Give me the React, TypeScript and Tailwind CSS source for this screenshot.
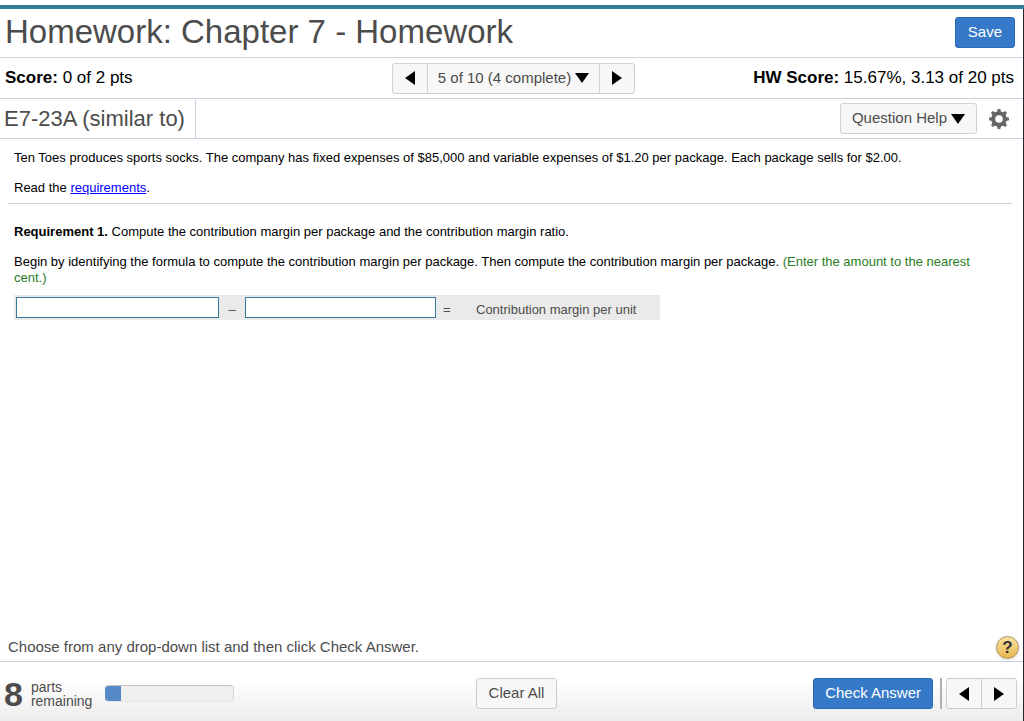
import { useState } from 'react';
import { clsx } from 'clsx';

const TOTAL_PARTS = 9;

interface ArrowProps {
  direction: 'left' | 'right' | 'down';
}

const arrowPoints = {
  left: '10,0 10,14 0,7',
  right: '0,0 0,14 10,7',
  down: '0,0 14,0 7,10',
};

const Arrow = ({ direction }: ArrowProps) => {
  const isDown = direction === 'down';
  return (
    <svg
      width={isDown ? 14 : 10}
      height={isDown ? 10 : 14}
      viewBox={isDown ? '0 0 14 10' : '0 0 10 14'}
      aria-hidden="true"
      className="shrink-0"
    >
      <polygon points={arrowPoints[direction]} fill="#000" />
    </svg>
  );
};

const GearIcon = () => (
  <svg width="20" height="20" viewBox="0 0 20 20" aria-hidden="true">
    <g fill="#666">
      {[0, 45, 90, 135].map((angle) => (
        <path
          key={angle}
          d="M8.7 0h2.6l0.7 3v14l-0.7 3H8.7L8 17V3z"
          transform={`rotate(${angle} 10 10)`}
        />
      ))}
      <circle cx="10" cy="10" r="7.7" />
    </g>
    <circle cx="10" cy="10" r="3.8" fill="#fff" />
  </svg>
);

interface TermSelectProps {
  label: string;
  className: string;
}

const TermSelect = ({ label, className }: TermSelectProps) => {
  const [value, setValue] = useState('');
  return (
    <select
      aria-label={label}
      value={value}
      onChange={(e) => setValue(e.target.value)}
      className={clsx('h-[21px] appearance-none border border-[#35789b] bg-white px-1 text-[13px] outline-none', className)}
    >
      <option value=""></option>
      <option value="sales">Sales revenue per unit</option>
      <option value="variable">Variable cost per unit</option>
      <option value="fixed">Fixed expenses</option>
    </select>
  );
};

const Header = () => (
  <header>
    <div className="flex h-[49px] items-center justify-between border-b border-[#ced3dd] pr-2 pb-[2px] pl-[5px]">
      <h1 className="text-[33px] leading-10 text-[#4c4c4c]">Homework: Chapter 7 - Homework</h1>
      <button type="button" className="h-[31px] rounded-[3px] border border-[#2c69b4] bg-[#3679c8] px-3 text-[15px] text-white">
        Save
      </button>
    </div>

    <div className="grid h-[41px] grid-cols-[1fr_auto_1fr] items-center border-b border-[#cccfdd] pr-px pl-[5px] text-[17px] text-black">
      <p><b>Score:</b> 0 of 2 pts</p>
      <nav aria-label="Questions" className="flex h-[31px] rounded-[3px] border border-[#d2d2d2] bg-[#f7f7f7]">
        <button type="button" aria-label="Previous question" className="flex w-[35px] items-center justify-center border-r border-[#d2d2d2]">
          <Arrow direction="left" />
        </button>
        <button type="button" className="flex items-center gap-1 px-[10px] text-[15px] text-[#4c4c4c]">
          5 of 10 (4 complete)
          <Arrow direction="down" />
        </button>
        <button type="button" aria-label="Next question" className="flex w-[35px] items-center justify-center border-l border-[#d2d2d2]">
          <Arrow direction="right" />
        </button>
      </nav>
      <p className="pr-2 text-right"><b>HW Score:</b> 15.67%, 3.13 of 20 pts</p>
    </div>

    <div className="flex h-10 items-center border-b border-[#cccfdd] pr-[14px] pl-1">
      <h2 className="flex h-[38px] items-center border-r border-[#cccfdd] pr-[10px] text-[22px] text-[#4c4c4c]">
        E7-23A (similar to)
      </h2>
      <button type="button" className="ml-auto flex h-[31px] items-center gap-1 rounded-[3px] border border-[#d2d2d2] bg-[#f7f7f7] px-[11px] text-[15px] text-[#4c4c4c]">
        Question Help
        <Arrow direction="down" />
      </button>
      <button type="button" aria-label="Settings" className="ml-3">
        <GearIcon />
      </button>
    </div>
  </header>
);

const Question = () => (
  <main className="flex-1 pt-[11px] pr-[11px] pl-2 text-[13px] leading-4 text-black">
    <section className="border-b border-[#cccfdd] px-[6px] pb-[7px]">
      <p>
        Ten Toes produces sports socks. The company has fixed expenses of $85,000 and variable expenses of $1.20 per
        package. Each package sells for $2.00.
      </p>
      <p className="mt-[14px]">
        Read the <a href="#requirements" className="text-[#0000ff] underline">requirements</a>.
      </p>
    </section>

    <section className="pt-5 pr-4 pl-[6px]">
      <p><b>Requirement 1.</b> Compute the contribution margin per package and the contribution margin ratio.</p>
      <p className="mt-[14px]">
        Begin by identifying the formula to compute the contribution margin per package. Then compute the contribution
        margin per package. <span className="text-[#2b7d1f]">(Enter the amount to the nearest cent.)</span>
      </p>
      <div className="mt-[9px] flex h-[25px] w-fit items-center bg-[#eaeaea] pr-6 pl-[2px] text-[#4c4c4c]">
        <TermSelect label="First term" className="w-[203px]" />
        <span className="w-[26px] pt-1 text-center">–</span>
        <TermSelect label="Second term" className="w-[191px]" />
        <span className="w-10 pt-1 pl-[7px]">=</span>
        <span className="pt-1">Contribution margin per unit</span>
      </div>
    </section>
  </main>
);

const Footer = () => {
  const remaining = 8;
  const progress = ((TOTAL_PARTS - remaining) / TOTAL_PARTS) * 100;

  return (
    <footer>
      <div className="flex items-center justify-between border-b border-[#cccfdd] pr-1 pb-[2px] pl-2 text-[15px] text-[#4c4c4c]">
        <p>Choose from any drop-down list and then click Check Answer.</p>
        <button
          type="button"
          className="size-[23px] rounded-full border border-[#aa9460] bg-linear-to-b from-[#fbe3a0] to-[#e9b54c] text-[17px] leading-5 font-bold text-[#333] shadow-sm"
        >
          ?
        </button>
      </div>

      <div className="grid h-[59px] grid-cols-[1fr_auto_1fr] items-center bg-linear-to-b from-white from-30% to-[#ececec] pt-1 pr-[6px] pl-1 text-[15px] text-[#4c4c4c]">
        <div className="flex items-center">
          <span className="text-[34px] leading-8 font-bold">{remaining}</span>
          <span className="ml-2 text-sm leading-[14px]">parts<br />remaining</span>
          <div
            role="progressbar"
            aria-label="Parts completed"
            aria-valuenow={TOTAL_PARTS - remaining}
            aria-valuemax={TOTAL_PARTS}
            className="ml-[13px] h-[17px] w-[129px] overflow-hidden rounded-[4px] border border-t-[#c4c4c4] border-r-[#d5d5d5] border-b-[#e6e6e6] border-l-[#5b8cc6] bg-[#f0f0f0]"
          >
            <div className="h-full bg-[#5489c5]" style={{ width: `${progress}%` }} />
          </div>
        </div>
        <button type="button" className="ml-3 h-[31px] rounded-[3px] border border-[#cccccc] bg-[#f7f7f7] px-3">
          Clear All
        </button>
        <div className="flex items-center justify-end">
          <button type="button" className="h-[31px] rounded-[3px] border border-[#2c69b4] bg-[#3679c8] px-[11px] text-white">
            Check Answer
          </button>
          <div className="ml-[7px] h-[31px] border-l-2 border-[#b0b0b0]" />
          <div className="ml-1 flex h-[31px] rounded-[3px] border border-[#cccccc] bg-[#f7f7f7]">
            <button type="button" aria-label="Previous part" className="flex w-[35px] items-center justify-center border-r border-[#cccccc]">
              <Arrow direction="left" />
            </button>
            <button type="button" aria-label="Next part" className="flex w-[34px] items-center justify-center">
              <Arrow direction="right" />
            </button>
          </div>
        </div>
      </div>
    </footer>
  );
};

export default function App() {
  return (
    <div className="flex min-h-screen flex-col bg-white pt-[5px] font-['Liberation_Sans',Arial,sans-serif]">
      <div className="h-1 bg-[#347b9b]" />
      <div className="flex flex-1 flex-col border-r border-[#222733]">
        <Header />
        <Question />
        <Footer />
      </div>
    </div>
  );
}
